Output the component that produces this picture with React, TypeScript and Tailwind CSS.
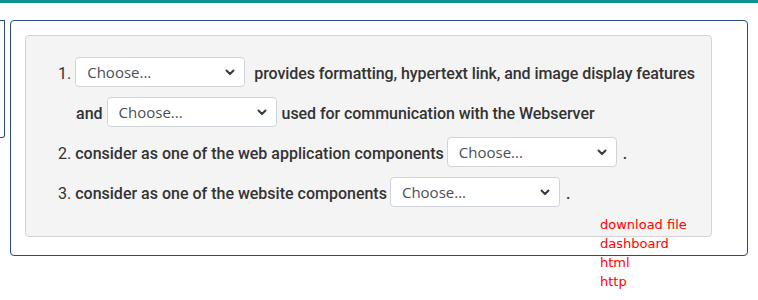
import { ReactNode } from "react";

const Choose = ({ width = 170 }: { width?: number }) => (
    <div
        className="relative flex h-[30px] items-center rounded-[4px] border border-[#ced4da] bg-white pl-[11px] text-[15px] text-[#495057] font-['Open_Sans',sans-serif] font-normal"
        style={{ width }}
    >
        Choose...
        <svg className="absolute right-[9px] top-[11px]" width="10" height="7" viewBox="0 0 10 7">
            <path d="M1.5 1.5 L5 5 L8.5 1.5" fill="none" stroke="#343a40" strokeWidth="2" strokeLinecap="round" strokeLinejoin="round" />
        </svg>
    </div>
);

const Row = ({ children, className = "" }: { children: ReactNode; className?: string }) => (
    <div className={`flex h-[40px] items-center [&>span]:pt-[3px] ${className}`}>{children}</div>
);

export default function App() {
    return (
        <div className="relative h-[300px] w-[758px] overflow-hidden bg-white font-['Roboto',sans-serif] text-[16px] text-[#333]">
            <div className="h-[3px] bg-[#0f918e]" />
            <div className="mt-[17px] flex">
                <div className="h-[118px] w-[5px] rounded-br-[3px] border-y border-r border-[#2b4a80]" />
                <div className="ml-[5px] h-[236px] w-[738px] rounded-[4px] border border-[#2b4a80] p-[14px]">
                    <div className="h-[202px] w-[687px] rounded-[4px] border border-[#d5d5d5] bg-[#f4f4f4] pl-[32px] pt-[16px] font-medium">
                        <Row>
                            <span className="mr-[4px] font-normal">1.</span>
                            <Choose />
                            <span className="ml-[9px] tracking-[-0.005em]">provides formatting, hypertext link, and image display features</span>
                        </Row>
                        <Row className="pl-[18px]">
                            <span className="mr-[4px]">and</span>
                            <Choose />
                            <span className="ml-[5px] tracking-[-0.004em]">used for communication with the Webserver</span>
                        </Row>
                        <Row>
                            <span className="font-normal">2.</span>
                            <span className="ml-[4px] mr-[3px]">consider as one of the web application components</span>
                            <Choose />
                            <span className="ml-[6px]">.</span>
                        </Row>
                        <Row>
                            <span className="font-normal">3.</span>
                            <span className="ml-[4px] mr-[3px]">consider as one of the website components</span>
                            <Choose />
                            <span className="ml-[6px]">.</span>
                        </Row>
                    </div>
                </div>
            </div>
            <ul className="absolute left-[600px] top-[215px] font-['DejaVu_Sans',sans-serif] text-[13px] leading-[19px] text-[#ff0000]">
                <li>download file</li>
                <li>dashboard</li>
                <li>html</li>
                <li>http</li>
            </ul>
        </div>
    );
}
